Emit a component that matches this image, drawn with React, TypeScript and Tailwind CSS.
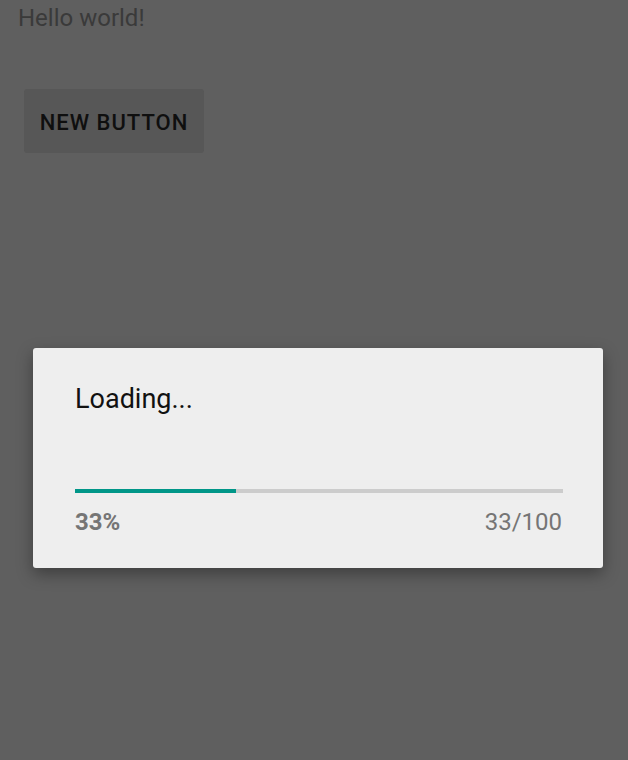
import React from "react";

export default function App() {
  const progress = 33;
  return (
    <div
      className="w-[628px] h-[760px] bg-[#5f5f5f] flex flex-col overflow-hidden"
      style={{ fontFamily: "Roboto, 'Noto Sans', sans-serif" }}
    >
      <div className="pl-[18px] pt-[2px] text-[24px] leading-[32px] text-[#3a3a3a]">Hello world!</div>
      <div className="pl-[24px] pt-[55px]">
        <div className="w-[180px] h-[64px] rounded-[3px] bg-[#575757] flex items-center justify-center pt-[2px] text-[22px] font-medium text-[#0f0f0f] tracking-[1px]">
          NEW BUTTON
        </div>
      </div>
      <div className="pl-[33px] pt-[195px]">
        <div className="w-[570px] h-[220px] rounded-[3px] bg-[#eeeeee] shadow-[0_6px_16px_rgba(0,0,0,0.35)] flex flex-col px-[42px] pr-[40px]">
          <div className="pt-[35px] text-[27px] leading-[32px] text-[#111111]">Loading...</div>
          <div className="mt-[74px] h-[4px] bg-[#cccccc] w-full">
            <div className="h-full bg-[#009688]" style={{ width: `${progress}%` }} />
          </div>
          <div className="mt-[15px] flex justify-between text-[24px] leading-[28px] text-[#757575]">
            <span className="font-bold">33%</span>
            <span className="pr-[1px]">33/100</span>
          </div>
        </div>
      </div>
    </div>
  );
}
